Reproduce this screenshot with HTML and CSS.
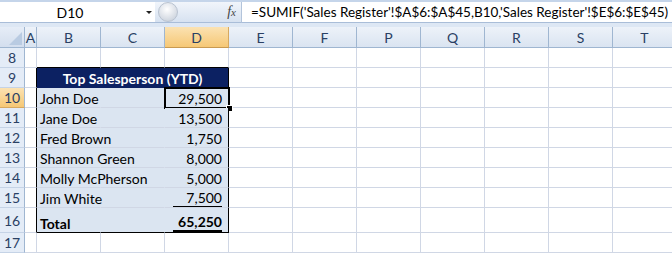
FILE: index.html
```html
<!DOCTYPE html>
<html lang="en">
<head>
<meta charset="UTF-8">
<title>Top Salesperson (YTD)</title>
<link rel="stylesheet" href="styles.css">
</head>
<body>

<div class="formula-bar">
    <div class="name-box">
        <span class="name">D10</span>
        <span class="arrow"></span>
    </div>
    <div class="fx-area">
        <span class="knob"></span>
        <span class="fx"><i>f</i><span class="fx-x">x</span></span>
    </div>
    <div class="formula">=SUMIF('Sales Register'!$A$6:$A$45,B10,'Sales Register'!$E$6:$E$45)</div>
</div>

<table class="sheet">
    <colgroup>
        <col class="col-hdr">
        <col class="col-a">
        <col class="col-std"><col class="col-std"><col class="col-std"><col class="col-std"><col class="col-std">
        <col class="col-std"><col class="col-std"><col class="col-std"><col class="col-std"><col class="col-std">
    </colgroup>
    <thead>
        <tr>
            <th class="corner">
                <svg width="24" height="20" viewBox="0 0 24 20"><polygon points="9,18 22,18 22,5" fill="#b9cbe2"/></svg>
            </th>
            <th>A</th><th>B</th><th>C</th><th class="sel">D</th><th>E</th><th>F</th>
            <th>P</th><th>Q</th><th>R</th><th>S</th><th>T</th>
        </tr>
    </thead>
    <tbody>
        <tr>
            <th>8</th><td></td><td class="b-bot"></td><td class="b-bot"></td><td class="b-bot"></td>
            <td></td><td></td><td></td><td></td><td></td><td></td><td></td>
        </tr>
        <tr>
            <th>9</th><td class="b-right"></td><td class="title" colspan="3">Top Salesperson (YTD)</td>
            <td></td><td></td><td></td><td></td><td></td><td></td><td></td>
        </tr>
        <tr>
            <th class="sel">10</th><td class="b-right"></td><td class="fill">John Doe</td><td class="fill"></td>
            <td class="fill num edge">29,500<span class="active"><span class="handle"></span></span></td>
            <td></td><td></td><td></td><td></td><td></td><td></td><td></td>
        </tr>
        <tr>
            <th>11</th><td class="b-right"></td><td class="fill">Jane Doe</td><td class="fill"></td>
            <td class="fill num edge">13,500</td>
            <td></td><td></td><td></td><td></td><td></td><td></td><td></td>
        </tr>
        <tr>
            <th>12</th><td class="b-right"></td><td class="fill">Fred Brown</td><td class="fill"></td>
            <td class="fill num edge">1,750</td>
            <td></td><td></td><td></td><td></td><td></td><td></td><td></td>
        </tr>
        <tr>
            <th>13</th><td class="b-right"></td><td class="fill">Shannon Green</td><td class="fill"></td>
            <td class="fill num edge">8,000</td>
            <td></td><td></td><td></td><td></td><td></td><td></td><td></td>
        </tr>
        <tr>
            <th>14</th><td class="b-right"></td><td class="fill">Molly McPherson</td><td class="fill"></td>
            <td class="fill num edge">5,000</td>
            <td></td><td></td><td></td><td></td><td></td><td></td><td></td>
        </tr>
        <tr>
            <th>15</th><td class="b-right"></td><td class="fill">Jim White</td><td class="fill"></td>
            <td class="fill num edge"><span class="acct">7,500</span></td>
            <td></td><td></td><td></td><td></td><td></td><td></td><td></td>
        </tr>
        <tr class="total-row">
            <th>16</th><td class="b-right"></td><td class="fill b-bot total">Total</td><td class="fill b-bot"></td>
            <td class="fill num edge b-bot total"><span class="acct">65,250</span></td>
            <td></td><td></td><td></td><td></td><td></td><td></td><td></td>
        </tr>
        <tr>
            <th>17</th><td></td><td></td><td></td><td></td>
            <td></td><td></td><td></td><td></td><td></td><td></td><td></td>
        </tr>
    </tbody>
</table>

</body>
</html>
```

FILE: styles.css
```css
body {
    margin: 0;
    width: 672px;
    height: 253px;
    overflow: hidden;
    background: #fff;
    font-family: Lato, 'Liberation Sans', sans-serif;
    color: #000;
}

/* formula bar */

.formula-bar {
    display: flex;
    height: 27px;
    box-sizing: border-box;
    border-top: 2px solid #c5d5ea;
    border-bottom: 4px solid #dde7f4;
    background: #fff;
}

.name-box {
    position: relative;
    width: 155px;
    display: flex;
    align-items: center;
    border-bottom: 1px solid #a9bdd8;
}

.name {
    width: 140px;
    text-align: center;
    font-size: 14px;
}

.arrow {
    position: absolute;
    right: 3px;
    top: 9px;
    border-left: 3px solid transparent;
    border-right: 3px solid transparent;
    border-top: 3px solid #222;
}

.fx-area {
    width: 86px;
    box-sizing: border-box;
    display: flex;
    align-items: center;
    justify-content: space-between;
    background: linear-gradient(#f1f5fb, #d7e2f1);
    border-bottom: 1px solid #a9bdd8;
    padding: 0 5px 0 3px;
}

.knob {
    width: 18px;
    height: 18px;
    border-radius: 50%;
    border: 1px solid #b9c3d1;
    background: radial-gradient(circle at 45% 35%, #ffffff, #d3d9e2 70%, #bfc6d1);
}

.fx {
    font-family: 'Liberation Serif', serif;
    font-size: 14px;
    color: #444;
}

.fx-x {
    font-style: italic;
    font-size: 11px;
}

.formula {
    flex: 1;
    display: flex;
    align-items: center;
    padding-left: 9px;
    font-size: 13.5px;
    white-space: nowrap;
    overflow: hidden;
    border-left: 1px solid #b3c4db;
    border-bottom: 1px solid #a9bdd8;
}

/* grid */

.sheet {
    table-layout: fixed;
    border-collapse: separate;
    border-spacing: 0;
    width: 677px;
    font-size: 14px;
}

.col-hdr { width: 25px; }
.col-a { width: 12px; }
.col-std { width: 64px; }

.sheet th,
.sheet td {
    box-sizing: border-box;
    height: 20px;
    padding: 0 3px;
    border-right: 1px solid #d0d7e5;
    border-bottom: 1px solid #d0d7e5;
    white-space: nowrap;
    overflow: visible;
    line-height: 17px;
    vertical-align: bottom;
}

.sheet thead th {
    height: 21px;
    font-weight: normal;
    color: #2a4064;
    text-align: center;
    background: linear-gradient(#edf2f9, #dae4f1);
    border-right-color: #9fb6d1;
    border-bottom-color: #9fb6d1;
    padding: 0;
    vertical-align: middle;
}

.sheet thead th.sel {
    background: linear-gradient(#fbe2b2, #f6c876);
    border-right-color: #d7a960;
    border-bottom-color: #c89a52;
}

.sheet thead th.corner {
    padding: 0;
    background: linear-gradient(#e6edf7, #d3deee);
}

.corner svg {
    display: block;
}

.sheet tbody th {
    font-weight: normal;
    color: #2a4064;
    text-align: center;
    background: #e4ecf7;
    border-right-color: #9fb6d1;
    border-bottom-color: #c5d3e6;
    padding: 0;
    vertical-align: middle;
}

.sheet tbody th.sel {
    background: linear-gradient(#fbe2b2, #f6c876);
    border-bottom-color: #d7a960;
}

.total-row th,
.total-row td {
    height: 25px;
}

/* table block */

.b-bot { border-bottom-color: #000 !important; }
.b-right { border-right-color: #000 !important; }

.title {
    background: #0c2162;
    color: #fff;
    font-weight: bold;
    text-align: center;
    border-right-color: #000 !important;
    border-bottom-color: #0c2162 !important;
}

.fill {
    background: #dbe5f1;
    border-right-color: #dbe5f1 !important;
    border-bottom-color: #dbe5f1;
}

.sheet td.num {
    text-align: right;
    position: relative;
    padding-right: 6px;
}

.edge {
    border-right-color: #000 !important;
}

.total {
    font-weight: bold;
    vertical-align: middle;
}

.acct {
    display: inline-block;
    width: 49px;
    border-bottom: 1px solid #000;
    line-height: 16px;
}

.total .acct {
    border-bottom-width: 2px;
}

/* selection */

.active {
    position: absolute;
    left: -1px;
    top: -1px;
    width: 66px;
    height: 22px;
    box-sizing: border-box;
    border: 2px solid #000;
}

.handle {
    position: absolute;
    right: -5px;
    bottom: -5px;
    width: 5px;
    height: 5px;
    background: #000;
    border: 1px solid #fff;
}
```
